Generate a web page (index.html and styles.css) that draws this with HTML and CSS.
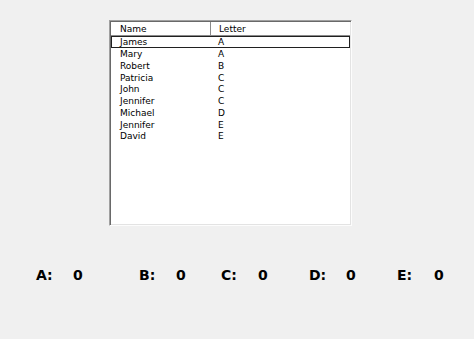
FILE: index.html
```html
<!DOCTYPE html>
<html>
<head>
<meta charset="utf-8">
<link rel="stylesheet" href="styles.css">
</head>
<body>
<div class="page">
  <div class="listview">
    <div class="header">
      <div class="hcell name">Name</div>
      <div class="hcell letter">Letter</div>
    </div>
    <div class="rows">
      <div class="row focused"><span class="c1">James</span><span class="c2">A</span></div>
      <div class="row"><span class="c1">Mary</span><span class="c2">A</span></div>
      <div class="row"><span class="c1">Robert</span><span class="c2">B</span></div>
      <div class="row"><span class="c1">Patricia</span><span class="c2">C</span></div>
      <div class="row"><span class="c1">John</span><span class="c2">C</span></div>
      <div class="row"><span class="c1">Jennifer</span><span class="c2">C</span></div>
      <div class="row"><span class="c1">Michael</span><span class="c2">D</span></div>
      <div class="row"><span class="c1">Jennifer</span><span class="c2">E</span></div>
      <div class="row"><span class="c1">David</span><span class="c2">E</span></div>
    </div>
  </div>
  <div class="counts">
    <div class="count"><span class="lbl">A:</span><span class="val">0</span></div>
    <div class="count"><span class="lbl">B:</span><span class="val">0</span></div>
    <div class="count"><span class="lbl">C:</span><span class="val">0</span></div>
    <div class="count"><span class="lbl">D:</span><span class="val">0</span></div>
    <div class="count"><span class="lbl">E:</span><span class="val">0</span></div>
  </div>
</div>
</body>
</html>
```

FILE: styles.css
```css
html, body {
  margin: 0;
  padding: 0;
  background: #f0f0f0;
}
.page {
  width: 474px;
  height: 339px;
  padding-top: 20px;
  box-sizing: border-box;
  font-family: "DejaVu Sans", sans-serif;
}
.listview {
  margin-left: 109px;
  width: 243px;
  height: 206px;
  box-sizing: border-box;
  background: #fff;
  border-top: 1px solid #a0a0a0;
  border-left: 1px solid #a0a0a0;
  border-right: 1px solid #fcfcfc;
  border-bottom: 1px solid #fcfcfc;
  box-shadow: inset 1px 1px 0 #696969, inset -1px -1px 0 #e3e3e3;
  padding: 1px;
}
.header {
  display: flex;
  height: 14px;
  border-bottom: 1px solid #8a8a8a;
  box-sizing: border-box;
  font-size: 9px;
  line-height: 14px;
  color: #000;
}
.hcell {
  padding-left: 9px;
  box-sizing: border-box;
}
.hcell.name {
  width: 100px;
  border-right: 1px solid #8a8a8a;
}
.hcell.letter {
  padding-left: 8px;
}
.rows {
  font-size: 9px;
}
.row {
  display: flex;
  height: 11.75px;
  line-height: 11.75px;
  box-sizing: border-box;
  border: 1px solid transparent;
  color: #000;
}
.row.focused {
  border-color: #202020;
  height: 12px;
}
.row .c1 {
  width: 100px;
  padding-left: 8px;
  box-sizing: border-box;
  margin-top: 0;
}
.row .c2 {
  padding-left: 6px;
  margin-top: 0;
}
.counts {
  display: grid;
  grid-template-columns: 103px 82px 88px 88px auto;
  padding-left: 36px;
  margin-top: 41px;
  font-size: 14px;
  font-weight: bold;
  line-height: 17px;
  color: #000;
}
.count {
  display: flex;
}
.lbl {
  width: 37px;
}
```
